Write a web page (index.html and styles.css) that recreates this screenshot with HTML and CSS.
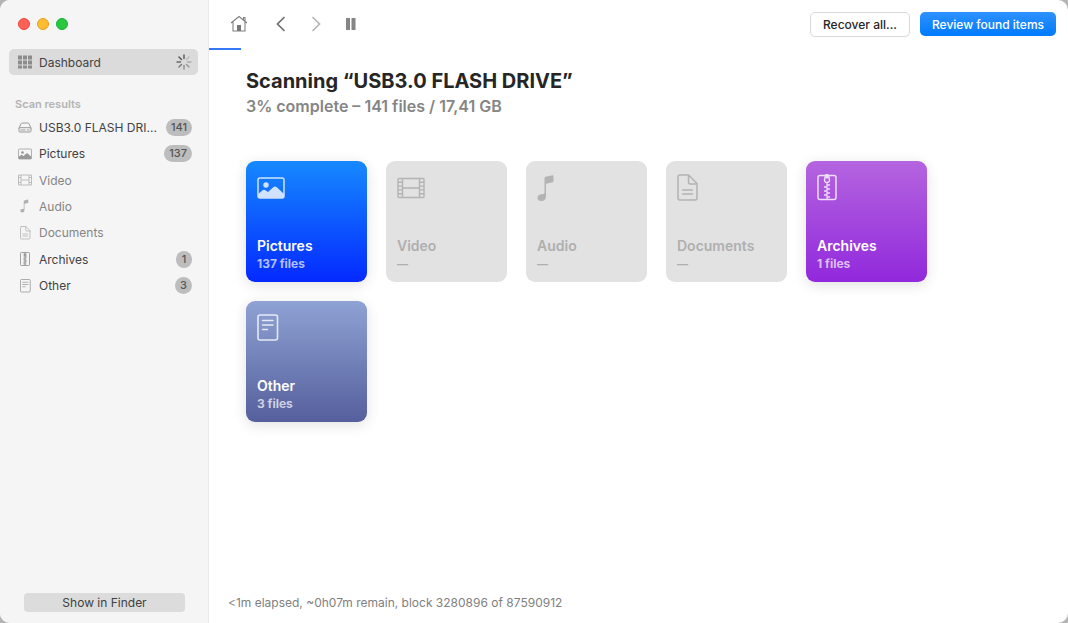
FILE: index.html
```html
<!DOCTYPE html>
<html lang="en">
<head>
<meta charset="utf-8">
<meta name="viewport" content="width=device-width, initial-scale=1">
<title>Dashboard</title>
<link rel="stylesheet" href="styles.css">
</head>
<body>
<svg class="defs" aria-hidden="true">
  <symbol id="i-picture" viewBox="0 0 28 28"><rect x="1" y="4" width="26" height="20" rx="2" fill="none" stroke="currentColor" stroke-width="1.5"/><circle cx="9" cy="11" r="2.7" fill="currentColor"/><path d="M1 20l5-4q1-.7 2 0l3 2 5.500-5q1.500-1.200 3 0L27 20v2q0 2-2 2H3q-2 0-2-2z" fill="currentColor"/></symbol>
  <symbol id="i-video" viewBox="0 0 28 28"><path d="M2 4.500h24a1 1 0 0 1 1 1v17a1 1 0 0 1-1 1H2a1 1 0 0 1-1-1v-17a1 1 0 0 1 1-1zM5.500 4.500v19M22.500 4.500v19M5.500 14h17M1 8.300h4.500M1 12.100h4.500M1 15.900h4.500M1 19.700h4.500M22.500 8.300H27M22.500 12.100H27M22.500 15.900H27M22.500 19.700H27" fill="none" stroke="currentColor" stroke-width="1.400"/></symbol>
  <symbol id="i-film" viewBox="0 0 14 14"><path d="M.500 2h13v10H.500zM3 2v10M11 2v10M3 7h8M.500 4.500H3M.500 9.500H3M11 4.500h2.500M11 9.500h2.500" fill="none" stroke="currentColor" stroke-width=".8"/></symbol>
  <symbol id="i-audio" viewBox="0 0 28 28"><path d="M7.500 4q0-1 1-1.200l7-1.600q1-.2 1 .8v5q0 1-1 1.200l-6.500 1.500V22q0 5-4.500 5Q.5 27 .5 23.700q0-3 3.700-3.500l2.300-.3q1-.2 1-1.200z" fill="currentColor"/></symbol>
  <symbol id="i-document" viewBox="0 0 28 28"><path d="M3 1h8.500L20 9.500V24q0 2-2 2H3q-2 0-2-2V3q0-2 2-2zM11.500 1v7q0 2 2 2H20M5.500 16h10M5.500 20h10" fill="none" stroke="currentColor" stroke-width="1.500" stroke-linecap="round" stroke-linejoin="round"/></symbol>
  <symbol id="i-archive" viewBox="0 0 28 28"><rect x="1" y="1.500" width="18" height="24" rx="2" fill="none" stroke="currentColor" stroke-width="1.500"/><path d="M10 9v16" stroke="currentColor" stroke-width="1.200"/><path d="M10 11h3M7 13h3M10 15h3M7 17h3M10 19h3M7 21h3M10 23h3" stroke="currentColor" stroke-width="1.400"/><path d="M10 .5q2 0 2 3l.5 2.500q0 2.500-2.500 2.500T7.500 6L8 3.500q0-3 2-3z" fill="none" stroke="currentColor" stroke-width="1.300"/><path d="M8.500 1h3v3.500h-3z" fill="currentColor"/></symbol>
  <symbol id="i-zip" viewBox="0 0 14 14"><rect x=".5" y=".5" width="9" height="13" rx=".8" fill="none" stroke="currentColor" stroke-width=".9"/><path d="M5 1v12" stroke="currentColor" stroke-width="2.600" opacity=".7"/><path d="M5 5h1.500M3.500 7H5M5 9h1.500M3.500 11H5" stroke="currentColor" stroke-width="1"/><circle cx="5" cy="3" r="1.300" fill="currentColor"/></symbol>
  <symbol id="i-other" viewBox="0 0 28 28"><rect x="1" y="1" width="19.500" height="25" rx="2" fill="none" stroke="currentColor" stroke-width="1.600"/><path d="M5.500 6.500h10.500M5.500 11H16M5.500 15.500h5" stroke="currentColor" stroke-width="1.500" stroke-linecap="round"/></symbol>
  <symbol id="i-drive" viewBox="0 0 14 14"><path d="M1 8l2-4.200q.4-.8 1.200-.8h5.600q.8 0 1.200.8L13 8v3q0 1-1 1H2q-1 0-1-1zM1 8.500q.3-.8 1-.8h10q.7 0 1 .8M9 10h2.500M2.500 10h5" fill="none" stroke="currentColor" stroke-width="1"/></symbol>
</svg>

<div class="window">
  <aside class="sidebar">
    <div class="lights">
      <button class="light light-close" aria-label="Close"></button>
      <button class="light light-min" aria-label="Minimize"></button>
      <button class="light light-zoom" aria-label="Zoom"></button>
    </div>
    <a class="row dashboard" href="#">
      <svg class="row-icon" viewBox="0 0 14 14" aria-hidden="true"><path d="M0 .5h4v4H0zM5 .5h4v4H5zM10 .5h4v4h-4zM0 5.500h4v4H0zM5 5.500h4v4H5zM10 5.500h4v4h-4zM0 10.500h4v3H0zM5 10.500h4v3H5zM10 10.500h4v3h-4z" fill="#8c8c8c"/></svg>
      <span class="row-label">Dashboard</span>
      <svg class="spinner" viewBox="0 0 16 16" aria-hidden="true"><g stroke="#555" stroke-width="1.400" stroke-linecap="round"><path d="M8 1v3.500"/><path d="M13 3l-2.500 2.500" opacity=".25"/><path d="M15 8h-3.500" opacity=".35"/><path d="M13 13l-2.500-2.500" opacity=".5"/><path d="M8 15v-3.500" opacity=".6"/><path d="M3 13l2.500-2.500" opacity=".75"/><path d="M1 8h3.500" opacity=".85"/><path d="M3 3l2.500 2.500"/></g></svg>
    </a>
    <h2 class="section">Scan results</h2>
    <nav class="results">
      <a class="row" href="#"><svg class="row-icon"><use href="#i-drive"/></svg><span class="row-label">USB3.0 FLASH DRI...</span><span class="badge">141</span></a>
      <a class="row" href="#"><svg class="row-icon"><use href="#i-picture"/></svg><span class="row-label">Pictures</span><span class="badge">137</span></a>
      <a class="row empty" href="#"><svg class="row-icon"><use href="#i-film"/></svg><span class="row-label">Video</span></a>
      <a class="row empty" href="#"><svg class="row-icon narrow"><use href="#i-audio"/></svg><span class="row-label">Audio</span></a>
      <a class="row empty" href="#"><svg class="row-icon narrow"><use href="#i-document"/></svg><span class="row-label">Documents</span></a>
      <a class="row" href="#"><svg class="row-icon narrow"><use href="#i-zip"/></svg><span class="row-label">Archives</span><span class="badge">1</span></a>
      <a class="row" href="#"><svg class="row-icon narrow"><use href="#i-other"/></svg><span class="row-label">Other</span><span class="badge">3</span></a>
    </nav>
    <button class="finder">Show in Finder</button>
  </aside>

  <main class="main">
    <header class="toolbar">
      <button class="tool" aria-label="Home"><svg width="18" height="18" viewBox="0 0 18 18"><path d="M1 8l8-6.500L17 8M3 6.500V16h12V6.500M13.500 5V2.500h1.500V6" fill="none" stroke="#808080" stroke-width="1.100"/><path d="M7 10h4v6H7z" fill="#777"/></svg></button>
      <button class="tool" aria-label="Back"><svg width="18" height="18" viewBox="0 0 18 18"><path d="M12 2.500L5.500 9l6.500 6.500" fill="none" stroke="#6e6e6e" stroke-width="1.700" stroke-linecap="round"/></svg></button>
      <button class="tool" aria-label="Forward"><svg width="18" height="18" viewBox="0 0 18 18"><path d="M6 2.500L12.500 9 6 15.500" fill="none" stroke="#b5b5b5" stroke-width="1.700" stroke-linecap="round"/></svg></button>
      <button class="tool" aria-label="Pause"><svg width="18" height="18" viewBox="0 0 18 18"><path d="M4 3h4v12H4zM9.500 3h4v12h-4z" fill="#858585"/></svg></button>
      <span class="spacer"></span>
      <button class="btn">Recover all...</button>
      <button class="btn primary">Review found items</button>
    </header>
    <div class="progress"><div class="progress-bar" style="width:3.7%"></div></div>

    <section class="content">
      <h1 class="title">Scanning “USB3.0 FLASH DRIVE”</h1>
      <p class="subtitle">3% complete – 141 files / 17,41 GB</p>
      <div class="cards">
        <a class="card pictures" href="#"><svg class="card-icon"><use href="#i-picture"/></svg><strong class="card-name">Pictures</strong><span class="card-count">137 files</span></a>
        <a class="card" href="#"><svg class="card-icon"><use href="#i-video"/></svg><strong class="card-name">Video</strong><span class="card-count none">—</span></a>
        <a class="card" href="#"><svg class="card-icon"><use href="#i-audio"/></svg><strong class="card-name">Audio</strong><span class="card-count none">—</span></a>
        <a class="card" href="#"><svg class="card-icon"><use href="#i-document"/></svg><strong class="card-name">Documents</strong><span class="card-count none">—</span></a>
        <a class="card archives" href="#"><svg class="card-icon"><use href="#i-archive"/></svg><strong class="card-name">Archives</strong><span class="card-count">1 files</span></a>
        <a class="card other" href="#"><svg class="card-icon"><use href="#i-other"/></svg><strong class="card-name">Other</strong><span class="card-count">3 files</span></a>
      </div>
    </section>
    <footer class="status">&lt;1m elapsed, ~0h07m remain, block 3280896 of 87590912</footer>
  </main>
</div>
</body>
</html>
```

FILE: styles.css
```css
* {
  box-sizing: border-box;
}

body {
  margin: 0;
  background: #b4b4b4;
  font-family: Inter, "Liberation Sans", sans-serif;
  font-size: 12px;
  color: #262626;
}

a {
  color: inherit;
  text-decoration: none;
}

button {
  padding: 0;
  border: 0;
  background: none;
  font: inherit;
  color: inherit;
}

.defs {
  position: absolute;
  width: 0;
  height: 0;
}

.window {
  display: flex;
  min-height: 100vh;
  border-radius: 10px;
  overflow: hidden;
  background: #fff;
}

/* Sidebar */

.sidebar {
  display: flex;
  flex-direction: column;
  flex: 0 0 209px;
  padding: 18px 10px 11px 9px;
  border-right: 1px solid #e9e9e9;
  background: #f5f5f5;
}

.lights {
  display: flex;
  gap: 7px;
  padding-left: 9px;
}

.light {
  width: 12px;
  height: 12px;
  border: 1px solid;
  border-radius: 50%;
}

.light-close {
  background: #ff5f57;
  border-color: #e9493f;
}

.light-min {
  background: #febc2e;
  border-color: #e2a325;
}

.light-zoom {
  background: #28c840;
  border-color: #1fae33;
}

.row {
  display: flex;
  align-items: center;
  padding: 0 6px 0 9px;
  color: #424242;
}

.row-icon {
  flex: none;
  width: 14px;
  height: 14px;
  margin-right: 7px;
  color: #999;
}

.row-icon.narrow {
  width: 16px;
  padding-left: 2px;
  margin-right: 5px;
}

.row-label {
  flex: 1;
  white-space: nowrap;
}

.row.empty {
  color: #858585;
}

.row.empty .row-icon {
  color: #b0b0b0;
}

.dashboard {
  height: 26px;
  margin-top: 19px;
  border-radius: 5px;
  background: #dbdbdb;
}

.spinner {
  width: 16px;
  height: 16px;
}

.section {
  margin: 22px 0 3px;
  padding-left: 6px;
  font-size: 11px;
  font-weight: 600;
  line-height: 14px;
  color: #b3b3b3;
}

.results {
  display: grid;
  grid-auto-rows: 1fr;
  height: 185px;
}

.badge {
  min-width: 16px;
  padding: 0 5px;
  border-radius: 9px;
  background: #bdbdbd;
  font-size: 11px;
  font-weight: 500;
  line-height: 17px;
  text-align: center;
  color: #555;
}

.finder {
  height: 19px;
  margin: auto 13px 0 15px;
  border-radius: 4px;
  background: #dcdcdc;
  color: #404040;
}

/* Main area */

.main {
  display: flex;
  flex: 1;
  flex-direction: column;
  min-width: 0;
}

.toolbar {
  display: flex;
  align-items: center;
  height: 48px;
  padding: 0 12px 0 21px;
}

.tool {
  width: 18px;
  height: 18px;
  margin-right: 17px;
}

.tool:first-child {
  margin-right: 24px;
}

.tool svg {
  display: block;
}

.spacer {
  flex: 1;
}

.btn {
  height: 25px;
  padding: 0 12px;
  border: 1px solid #d9d9d9;
  border-radius: 5px;
  background: #fff;
  font-weight: 500;
  white-space: nowrap;
}

.btn.primary {
  height: 24px;
  margin-left: 10px;
  border: 0;
  background: linear-gradient(#2e92ff, #007aff);
  color: #fff;
}

.progress {
  height: 2px;
}

.progress-bar {
  height: 2px;
  background: #3478f6;
}

.content {
  padding: 18px 37px;
}

.title {
  margin: 0;
  font-size: 20px;
  font-weight: 700;
  line-height: 26px;
}

.subtitle {
  margin: 1px 0 44px;
  font-size: 16px;
  font-weight: 600;
  line-height: 22px;
  color: #858585;
}

.cards {
  display: grid;
  grid-template-columns: repeat(auto-fill, 121px);
  gap: 19px;
  max-width: 700px;
}

.card {
  display: flex;
  flex-direction: column;
  height: 121px;
  padding: 13px 11px 9px;
  border-radius: 9px;
  background: #e2e2e2;
  color: #afafaf;
}

.card-icon {
  width: 28px;
  height: 28px;
  margin-bottom: auto;
  opacity: 0.9;
}

.card-name {
  font-size: 14px;
  font-weight: 600;
  line-height: 18px;
}

.card-count {
  font-size: 12px;
  font-weight: 600;
  line-height: 18px;
}

.card-count.none {
  font-size: 11px;
  font-weight: 700;
}

.pictures,
.archives,
.other {
  color: #fff;
  box-shadow: 0 3px 14px rgba(0, 0, 0, 0.12);
}

.pictures {
  background: linear-gradient(#1689ff, #0429ff);
}

.archives {
  background: linear-gradient(#b464df, #9129dc);
}

.other {
  background: linear-gradient(#8fa2d4, #555f9c);
}

.pictures .card-count,
.archives .card-count,
.other .card-count {
  font-weight: 700;
  color: rgba(255, 255, 255, 0.7);
}

.pictures .card-icon,
.archives .card-icon,
.other .card-icon {
  opacity: 0.8;
}

.status {
  margin-top: auto;
  padding: 0 19px 12px;
  line-height: 16px;
  color: #808080;
}
```
